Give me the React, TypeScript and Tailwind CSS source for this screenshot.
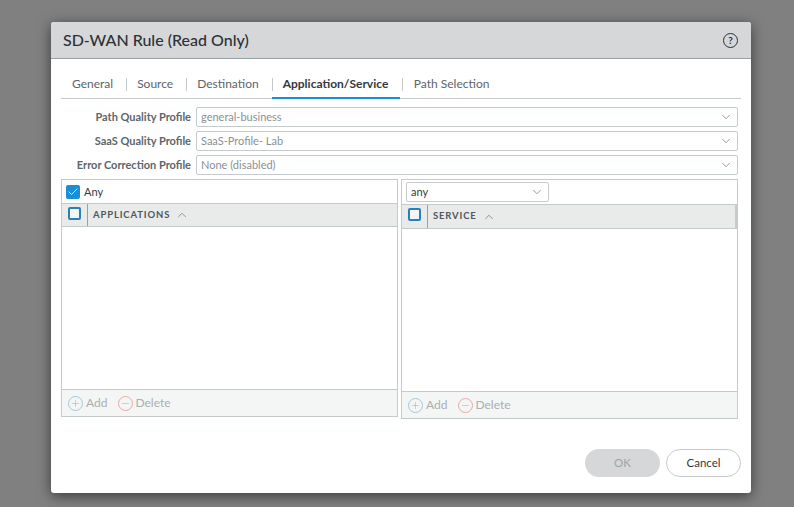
import React from 'react';
import { Check, ChevronDown, ChevronUp, Minus, Plus } from 'lucide-react';

const tabs = ['General', 'Source', 'Destination', 'Application/Service', 'Path Selection'];

const Caret: React.FC = () => <ChevronDown size={14} strokeWidth={1} className="text-[#4f585e]" />;

const FormRow: React.FC<{ label: string; value: string }> = ({ label, value }) => (
  <div className="flex items-center h-5">
    <label className="w-[135px] text-right pr-[5px] pb-[2px] text-[11px] font-bold text-[#5c656a] leading-none">{label}</label>
    <div className="flex-1 h-5 border border-[#c5cbcd] rounded-[2px] flex items-center justify-between pl-[4px] pr-[4px] text-[11px] text-[#8a9195]">
      <span>{value}</span>
      <Caret />
    </div>
  </div>
);

const GridHeader: React.FC<{ title: string; right?: boolean }> = ({ title, right }) => (
  <div className={`flex items-center bg-[#e9ebeb] border-y border-[#c5cbcd] ${right ? 'h-[25px] border-r-2' : 'h-[24px]'}`}>
    <div className="w-[26px] h-full flex items-center pl-[6px] border-r border-[#9aa1a4]">
      <span className="w-[13px] h-[13px] mb-[4px] border-2 border-[#2a80b5] rounded-[2px] bg-[#f4f6f6]" />
    </div>
    <span className="ml-[5px] text-[9.5px] font-bold tracking-[0.85px] text-[#4f585e]">{title}</span>
    <ChevronUp size={14} strokeWidth={1} className="ml-[5px] text-[#4f585e]" />
  </div>
);

const GridFooter: React.FC = () => (
  <div className="h-[27px] bg-[#f4f6f6] border-t border-[#c5cbcd] flex items-center pl-[6px] text-[12px] text-[#a9aeb1]">
    <span className="w-[15px] h-[15px] rounded-full border border-[#a3c8de] flex items-center justify-center">
      <Plus size={11} strokeWidth={1} className="text-[#7fa9c4]" />
    </span>
    <span className="ml-[3px]">Add</span>
    <span className="ml-[11px] w-[15px] h-[15px] rounded-full border border-[#e8a8a8] flex items-center justify-center">
      <Minus size={11} strokeWidth={1} className="text-[#d98686]" />
    </span>
    <span className="ml-[2px]">Delete</span>
  </div>
);

export default function App() {
  return (
    <div className="w-[794px] h-[507px] overflow-hidden bg-[#808080] pt-[22px] pl-[51px] font-['Lato','Liberation_Sans',sans-serif]">
      <div className="w-[700px] h-[471px] bg-white rounded-[3px] shadow-[0_3px_14px_rgba(0,0,0,0.55)] flex flex-col overflow-hidden">
        {/* Title bar */}
        <div className="h-[37px] shrink-0 bg-[#d5d7d9] border-b border-[#9aa1a4] flex items-center justify-between pl-[12px] pr-[13px]">
          <h2 className="text-[16px] font-medium text-[#2c3136]">SD-WAN Rule (Read Only)</h2>
          <span className="w-[15px] h-[15px] rounded-full border-[1.5px] border-[#2c3136] flex items-center justify-center text-[10px] font-bold text-[#2c3136] leading-none">?</span>
        </div>

        <div className="flex-1 flex flex-col px-[10px]">
          {/* Tabs */}
          <div className="h-[40px] shrink-0 border-b border-[#c5cbcd] flex items-end pl-px">
            {tabs.map((tab, i) => {
              const active = tab === 'Application/Service';
              const last = i === tabs.length - 1;
              return (
                <div key={tab} className="flex items-end h-[26px]">
                  {i > 0 && <span className={`w-px h-[13px] mb-[7px] bg-[#c5cbcd] ${last ? 'ml-[2px]' : ''}`} />}
                  <div className={`h-[26px] flex items-center text-[12px] mb-[-1px] ${active ? '-ml-px pl-[11px] pr-[11.5px] pb-[2px] font-bold text-[#333a3f] border-b-2 border-[#1b8fd6]' : last ? 'pl-[11px] pb-[4px] text-[#5c656a]' : 'pl-[10px] pr-[13px] pb-[4px] text-[#5c656a]'}`}>
                    {tab}
                  </div>
                </div>
              );
            })}
          </div>

          {/* Profiles */}
          <div className="flex flex-col gap-[4px] mt-[8px] pr-[3px] shrink-0">
            <FormRow label="Path Quality Profile" value="general-business" />
            <FormRow label="SaaS Quality Profile" value="SaaS-Profile- Lab" />
            <FormRow label="Error Correction Profile" value="None (disabled)" />
          </div>

          {/* Grids */}
          <div className="flex items-start gap-[3px] mt-[4px] pr-[3px]">
            <div className="w-[337px] h-[238px] border border-[#c5cbcd] flex flex-col">
              <div className="h-[23px] shrink-0 flex items-center pl-[4px] pt-px text-[11px] text-[#333a3f]">
                <span className="w-[14px] h-[14px] rounded-[2px] bg-[#1b8fd6] flex items-center justify-center">
                  <Check size={12} strokeWidth={1.5} className="text-white" />
                </span>
                <span className="ml-[4px]">Any</span>
              </div>
              <GridHeader title="APPLICATIONS" />
              <div className="flex-1" />
              <GridFooter />
            </div>

            <div className="w-[337px] h-[240px] border border-[#c5cbcd] flex flex-col">
              <div className="h-[24px] shrink-0 flex items-center pl-[4px]">
                <div className="w-[143px] h-[20px] border border-[#c5cbcd] rounded-[2px] flex items-center justify-between pl-[4px] pr-[4px] text-[11px] text-[#333a3f]">
                  <span>any</span>
                  <Caret />
                </div>
              </div>
              <GridHeader title="SERVICE" right />
              <div className="flex-1" />
              <GridFooter />
            </div>
          </div>

          {/* Buttons */}
          <div className="flex justify-end gap-[6px] mt-[30px]">
            <button className="w-[75px] h-[28px] rounded-full bg-[#d5d7d9] text-[11.5px] text-[#a0a5a8]">OK</button>
            <button className="w-[75px] h-[28px] rounded-full border border-[#c5cbcd] bg-white text-[11.5px] text-[#333a3f]">Cancel</button>
          </div>
        </div>
      </div>
    </div>
  );
}
